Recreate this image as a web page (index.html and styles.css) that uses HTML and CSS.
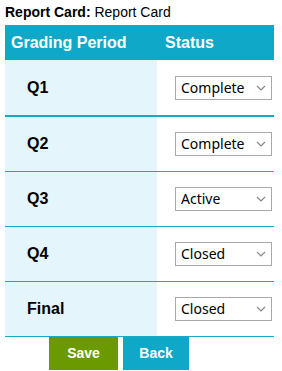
FILE: index.html
```html
<!DOCTYPE html>
<html lang="en">
<head>
  <meta charset="UTF-8" />
  <title>Report Card</title>
  <link rel="stylesheet" href="styles.css">
</head>
<body>

<div class="page">
  <div class="title"><strong>Report Card:</strong> Report Card</div>

  <table class="grades">
    <thead>
      <tr>
        <th class="col-period">Grading Period</th>
        <th class="col-status">Status</th>
      </tr>
    </thead>
    <tbody>
      <tr class="first">
        <td class="period">Q1</td>
        <td class="status">
          <div class="pick">
            <select><option selected>Complete</option><option>Active</option><option>Closed</option></select>
            <svg class="chev" width="10" height="6" viewBox="0 0 10 6"><path d="M1 1l4 4 4-4" fill="none" stroke="#888" stroke-width="1.2"/></svg>
          </div>
        </td>
      </tr>
      <tr>
        <td class="period">Q2</td>
        <td class="status">
          <div class="pick">
            <select><option selected>Complete</option><option>Active</option><option>Closed</option></select>
            <svg class="chev" width="10" height="6" viewBox="0 0 10 6"><path d="M1 1l4 4 4-4" fill="none" stroke="#888" stroke-width="1.2"/></svg>
          </div>
        </td>
      </tr>
      <tr>
        <td class="period">Q3</td>
        <td class="status">
          <div class="pick">
            <select><option>Complete</option><option selected>Active</option><option>Closed</option></select>
            <svg class="chev" width="10" height="6" viewBox="0 0 10 6"><path d="M1 1l4 4 4-4" fill="none" stroke="#888" stroke-width="1.2"/></svg>
          </div>
        </td>
      </tr>
      <tr>
        <td class="period">Q4</td>
        <td class="status">
          <div class="pick">
            <select><option>Complete</option><option>Active</option><option selected>Closed</option></select>
            <svg class="chev" width="10" height="6" viewBox="0 0 10 6"><path d="M1 1l4 4 4-4" fill="none" stroke="#888" stroke-width="1.2"/></svg>
          </div>
        </td>
      </tr>
      <tr>
        <td class="period">Final</td>
        <td class="status">
          <div class="pick">
            <select><option>Complete</option><option>Active</option><option selected>Closed</option></select>
            <svg class="chev" width="10" height="6" viewBox="0 0 10 6"><path d="M1 1l4 4 4-4" fill="none" stroke="#888" stroke-width="1.2"/></svg>
          </div>
        </td>
      </tr>
    </tbody>
  </table>

  <div class="actions">
    <button class="btn btn-save">Save</button>
    <button class="btn btn-back">Back</button>
  </div>
</div>

</body>
</html>
```

FILE: styles.css
```css
body {
  margin: 0;
  font-family: "Liberation Sans", Arial, sans-serif;
  background: #fff;
  color: #000;
}
.page {
  padding: 4px 5px 0 5px;
}
.title {
  font-size: 14px;
  line-height: 16px;
  height: 21px;
}
.grades {
  width: 269px;
  border-collapse: collapse;
  table-layout: fixed;
}
.grades th,
.grades td {
  box-sizing: border-box;
}
.grades th {
  background-color: #0fa8c9;
  color: #fff;
  font-family: "Liberation Sans", Arial, sans-serif;
  font-size: 16px;
  font-weight: bold;
  text-align: left;
  height: 35px;
  padding: 0;
}
.col-period {
  width: 152px;
  padding-left: 6px !important;
}
.col-status {
  padding-left: 8px !important;
}
.grades td {
  height: 55px;
  padding: 0;
  border-bottom: 1px solid #1aa9c5;
}
.grades tr.first td {
  height: 56px;
  border-bottom-width: 2px;
}
.period {
  background-color: #e4f5fb;
  font-weight: bold;
  font-size: 16px;
  padding-left: 22px !important;
}
.status {
  text-align: right;
  padding-right: 2px !important;
}
.pick {
  position: relative;
  display: inline-block;
  vertical-align: middle;
}
.pick select {
  appearance: none;
  -webkit-appearance: none;
  width: 97px;
  height: 24px;
  margin: 0;
  padding: 0 0 0 5px;
  border: 1px solid #a9a9a9;
  border-radius: 0;
  background: #fff;
  font-family: "Noto Sans", "Open Sans", sans-serif;
  font-size: 14px;
  color: #000;
}
.chev {
  position: absolute;
  right: 6px;
  top: 9px;
  pointer-events: none;
}
.actions {
  padding-left: 44px;
  display: flex;
  gap: 5px;
}
.btn {
  height: 33px;
  border: none;
  border-radius: 0;
  color: #fff;
  font-family: "Liberation Sans", Arial, sans-serif;
  font-weight: bold;
  font-size: 14px;
  cursor: pointer;
  padding: 0;
}
.btn-save {
  width: 69px;
  background-color: #6a9a00;
}
.btn-back {
  width: 66px;
  background-color: #10a8c8;
}
```
